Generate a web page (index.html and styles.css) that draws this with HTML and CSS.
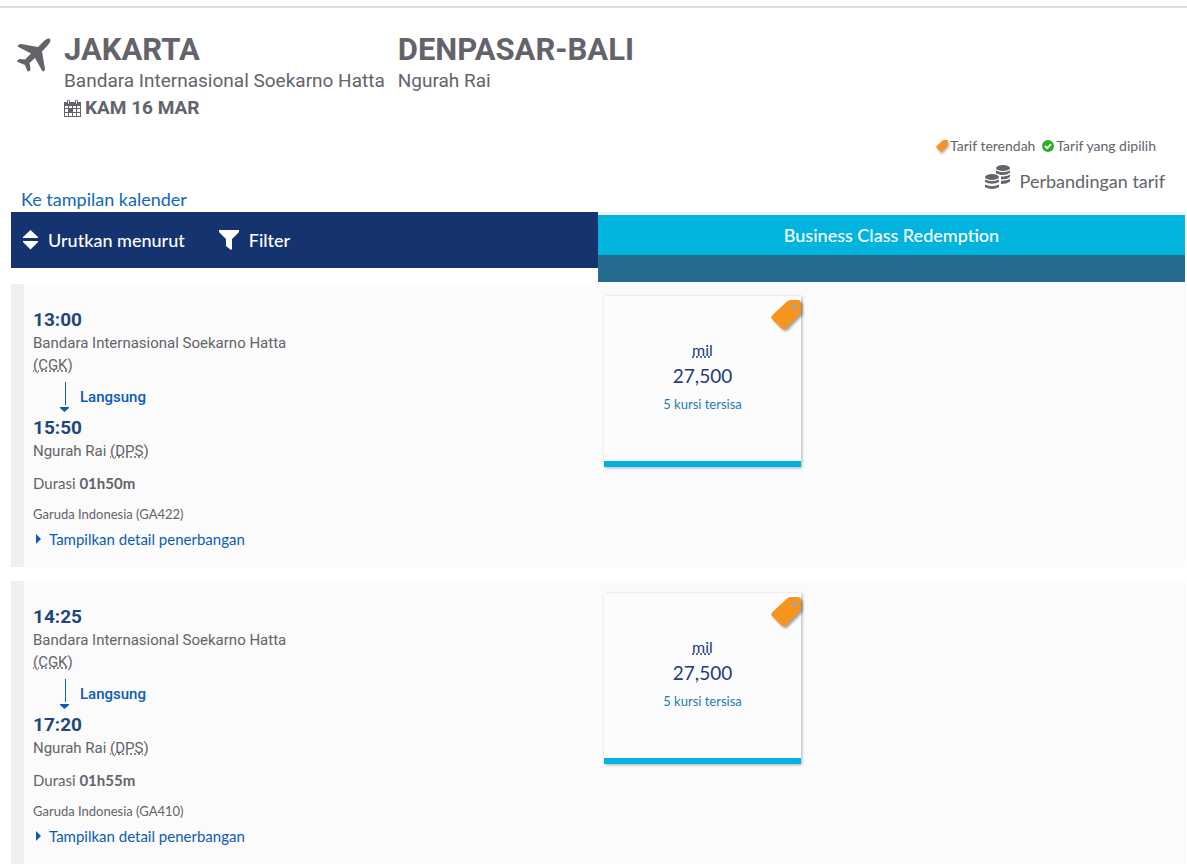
FILE: index.html
```html
<!DOCTYPE html>
<html lang="id">
  <head>
    <meta charset="UTF-8" />
    <meta name="viewport" content="width=device-width, initial-scale=1.0" />
    <title>Jakarta - Denpasar-Bali</title>

    <link rel="stylesheet" href="styles.css">
  </head>
  <body>
    <svg class="sprite" aria-hidden="true">
      <symbol id="icon-tag" viewBox="0 0 30 30">
        <path d="M16 1.500Q17.500 0 19.500 0H26.500Q30 0 30 3.500V11Q30 13 28.500 14.500L14.500 28.500Q12.500 30 10.500 28.500L1 19Q-.5 17 1 15.500Z" fill="#f7941e" />
        <circle cx="23" cy="7" r="2.500" fill="#a9a5a0" />
      </symbol>
    </svg>

    <header class="trip">
      <svg class="trip-plane" viewBox="0 0 34 34" aria-hidden="true">
        <path d="M33 1C34 2 33 5 31 7L25 13.500 28 31Q28 32 27 33L26.500 33.500Q25.500 33.500 25 32.500L18 20 12.500 25 13.500 31Q13.500 32 12.500 33L11.500 33.500Q10.500 33.500 10 32L8 27 2 24.500Q0 24 0 23Q1 21.500 2.500 21L8 21.500 14 15.500 1.500 9Q0 8.500 1 7.500L2 6.500Q3 6 4 6L21 9 27 3C29 1 32 0 33 1Z" />
      </svg>
      <div class="trip-place">
        <h1 class="trip-city">JAKARTA</h1>
        <p class="trip-airport">Bandara Internasional Soekarno Hatta</p>
        <p class="trip-date">
          <svg class="trip-calendar" viewBox="0 0 17 18" aria-hidden="true">
            <path d="M0 3H17V18H0ZM1 7V9H4V7ZM5 7V9H8V7ZM9 7V9H12V7ZM13 7V9H16V7ZM1 10V13H4V10ZM9 10V13H12V10ZM13 10V13H16V10ZM1 14V17H4V14ZM5 14V17H8V14ZM9 14V17H12V14ZM13 14V17H16V14Z" fill-rule="evenodd" />
            <rect x="3.500" y="1" width="2" height="4" rx="1" fill="#fff" stroke="#63636b" />
            <rect x="11.500" y="1" width="2" height="4" rx="1" fill="#fff" stroke="#63636b" />
          </svg>
          KAM 16 MAR
        </p>
      </div>
      <div class="trip-place">
        <h1 class="trip-city">DENPASAR-BALI</h1>
        <p class="trip-airport">Ngurah Rai</p>
      </div>
    </header>

    <main class="results">
      <div class="legend">
        <span class="legend-item">
          <svg class="legend-tag" aria-hidden="true"><use href="#icon-tag" /></svg>Tarif terendah
        </span>
        <span class="legend-item">
          <svg class="legend-check" viewBox="0 0 12 12" aria-hidden="true">
            <circle cx="6" cy="6" r="6" fill="#2bb02b" />
            <path d="M3 6L5.200 8.200 9 4.200" fill="none" stroke="#fff" stroke-width="1.800" />
          </svg>Tarif yang dipilih
        </span>
      </div>

      <div class="options">
        <a class="calendar-link" href="#">Ke tampilan kalender</a>
        <div class="compare">
          <svg class="compare-coins" viewBox="0 0 25 25" aria-hidden="true">
            <ellipse cx="18" cy="3" rx="7" ry="3" />
            <path d="M11 5.500Q18 9 25 5.500V7.500Q22 10.500 16 10 14 9 11 8.500ZM16 11.500Q22 11.500 25 9.500V12Q22 14.500 16 14.500ZM16 16Q22 15.500 25 14V16.500Q22 19 16 19Z" />
            <ellipse cx="7" cy="12" rx="7" ry="3" />
            <path d="M0 14.500Q7 18 14 14.500V17Q7 20.500 0 17ZM0 19.500Q7 23 14 19.500V22Q7 26 0 22Z" />
          </svg>
          Perbandingan tarif
        </div>
      </div>

      <div class="toolbar">
        <div class="toolbar-actions">
          <button class="toolbar-btn" type="button">
            <svg class="icon-sort" viewBox="0 0 15 20" aria-hidden="true"><path d="M7.500 0L15 7V8H0V7ZM0 11H15V12L7.500 19.500 0 12Z" /></svg>
            Urutkan menurut
          </button>
          <button class="toolbar-btn" type="button">
            <svg class="icon-filter" viewBox="0 0 20 20" aria-hidden="true"><path d="M0 0H20V2L13 9V19L12 20 7 16V9L0 2Z" /></svg>
            Filter
          </button>
        </div>
        <div class="cabin">
          <div class="cabin-name">Business Class Redemption</div>
          <div class="cabin-strip"></div>
        </div>
      </div>

      <section class="flight">
        <div class="flight-info">
          <div class="flight-time">13:00</div>
          <div class="flight-airport">Bandara Internasional Soekarno Hatta <abbr title="Jakarta">(CGK)</abbr></div>
          <div class="flight-stops">
            <svg class="icon-arrow" viewBox="0 0 9 30" aria-hidden="true"><path d="M5 0H6V23H5ZM0 25H9V26L4.500 30 0 26Z" /></svg>
            Langsung
          </div>
          <div class="flight-time">15:50</div>
          <div class="flight-airport">Ngurah Rai <abbr title="Denpasar">(DPS)</abbr></div>
          <div class="flight-duration">Durasi <strong>01h50m</strong></div>
          <div class="flight-carrier">Garuda Indonesia (GA422)</div>
          <a class="flight-details" href="#">Tampilkan detail penerbangan</a>
        </div>
        <div class="flight-fares">
          <button class="fare" type="button">
            <svg class="fare-tag" aria-hidden="true"><use href="#icon-tag" /></svg>
            <abbr class="fare-unit" title="miles">mil</abbr>
            <span class="fare-price">27,500</span>
            <span class="fare-seats">5 kursi tersisa</span>
          </button>
        </div>
      </section>

      <section class="flight">
        <div class="flight-info">
          <div class="flight-time">14:25</div>
          <div class="flight-airport">Bandara Internasional Soekarno Hatta <abbr title="Jakarta">(CGK)</abbr></div>
          <div class="flight-stops">
            <svg class="icon-arrow" viewBox="0 0 9 30" aria-hidden="true"><path d="M5 0H6V23H5ZM0 25H9V26L4.500 30 0 26Z" /></svg>
            Langsung
          </div>
          <div class="flight-time">17:20</div>
          <div class="flight-airport">Ngurah Rai <abbr title="Denpasar">(DPS)</abbr></div>
          <div class="flight-duration">Durasi <strong>01h55m</strong></div>
          <div class="flight-carrier">Garuda Indonesia (GA410)</div>
          <a class="flight-details" href="#">Tampilkan detail penerbangan</a>
        </div>
        <div class="flight-fares">
          <button class="fare" type="button">
            <svg class="fare-tag" aria-hidden="true"><use href="#icon-tag" /></svg>
            <abbr class="fare-unit" title="miles">mil</abbr>
            <span class="fare-price">27,500</span>
            <span class="fare-seats">5 kursi tersisa</span>
          </button>
        </div>
      </section>
    </main>
  </body>
</html>
```

FILE: styles.css
```css
* {
  box-sizing: border-box;
}

body {
  margin: 0;
  padding-top: 6px;
  background-color: #fff;
  color: #63636b;
  font-family: Lato, sans-serif;
  font-size: 15px;
}

h1,
p {
  margin: 0;
}

a {
  text-decoration: none;
}

button {
  border: 0;
  font-family: inherit;
  cursor: pointer;
}

.sprite {
  display: none;
}

/* trip header */
.trip {
  display: flex;
  align-items: flex-start;
  gap: 13px;
  padding: 24px 17px 0;
  border-top: 2px solid #dcdcdc;
  font-family: Roboto, sans-serif;
}

.trip-plane {
  width: 34px;
  height: 34px;
  margin-top: 6px;
  fill: #63636b;
}

.trip-city {
  font-size: 31px;
  line-height: 36px;
  font-weight: 700;
}

.trip-airport {
  font-size: 19px;
  line-height: 26px;
}

.trip-date {
  display: flex;
  align-items: center;
  gap: 4px;
  font-size: 19px;
  line-height: 28px;
  font-weight: 700;
}

.trip-calendar {
  width: 17px;
  height: 18px;
  fill: #63636b;
}

/* legend */
.results {
  padding: 0 2px 0 11px;
}

.legend {
  display: flex;
  justify-content: flex-end;
  gap: 7px;
  margin-top: 14px;
  padding-right: 29px;
  font-size: 14px;
  line-height: 20px;
}

.legend-item {
  display: flex;
  align-items: center;
  gap: 2px;
}

.legend-tag {
  width: 12px;
  height: 12px;
  overflow: visible;
  filter: drop-shadow(1px 2px 1px rgba(0, 0, 0, 0.3));
}

.legend-check {
  width: 12px;
  height: 12px;
}

.options {
  display: flex;
  justify-content: space-between;
  height: 56px;
  padding: 9px 20px 0 10px;
}

.compare {
  display: flex;
  align-items: center;
  align-self: flex-start;
  gap: 10px;
  font-size: 18px;
  line-height: 26px;
}

.compare-coins {
  width: 25px;
  height: 25px;
  margin-bottom: 6px;
  fill: #63636b;
}

.calendar-link {
  align-self: flex-end;
  color: #0f68b8;
  font-size: 18px;
  line-height: 26px;
}

/* toolbar */
.toolbar {
  display: grid;
  grid-template-columns: 1fr 1fr;
  align-items: start;
}

.toolbar-actions {
  display: flex;
  gap: 34px;
  height: 56px;
  padding: 0 12px;
  background-color: #15336f;
}

.toolbar-btn {
  display: flex;
  align-items: center;
  gap: 10px;
  padding: 0;
  background: none;
  color: #fff;
  font-size: 18px;
  font-weight: 500;
}

.toolbar-btn svg {
  fill: #fff;
}

.icon-sort {
  width: 15px;
  height: 20px;
}

.icon-filter {
  width: 20px;
  height: 20px;
}

.cabin {
  border-top: 3px solid #efefef;
}

.cabin-name {
  background-color: #00b4de;
  color: #fff;
  font-size: 18px;
  line-height: 40px;
  font-weight: 500;
  text-align: center;
}

.cabin-strip {
  height: 27px;
  background-color: #236c8d;
}

/* flights */
.flight {
  display: grid;
  grid-template-columns: 1fr 1fr;
  margin-top: 14px;
  background-color: #fbfbfb;
}

.toolbar + .flight {
  margin-top: 2px;
}

.flight-info {
  padding: 24px 9px 16px;
  border-left: 13px solid #efefef;
}

.flight-time {
  color: #1f477f;
  font-family: Roboto, sans-serif;
  font-size: 19px;
  line-height: 24px;
  font-weight: 700;
}

.flight-airport {
  max-width: 270px;
  font-family: Roboto, sans-serif;
  font-size: 15px;
  line-height: 22px;
}

.flight-stops {
  display: flex;
  align-items: center;
  gap: 11px;
  height: 40px;
  padding: 2px 0 0 27px;
  color: #0b5cb5;
  font-family: Roboto, sans-serif;
  font-size: 15px;
  font-weight: 500;
}

.icon-arrow {
  width: 9px;
  height: 30px;
  fill: #0b5cb5;
}

.flight-duration {
  margin-top: 10px;
  font-size: 15px;
  line-height: 22px;
}

.flight-carrier {
  margin-top: 10px;
  font-size: 13px;
  line-height: 20px;
}

.flight-details {
  display: flex;
  align-items: center;
  gap: 8px;
  width: fit-content;
  margin-top: 3px;
  padding-left: 3px;
  color: #0b5cb5;
  font-size: 15px;
  line-height: 24px;
}

.flight-details::before {
  content: "";
  border: 5px solid transparent;
  border-left-color: #0b5cb5;
  border-right: 0;
}

.flight-fares {
  padding: 12px 6px;
}

.fare {
  position: relative;
  display: flex;
  flex-direction: column;
  align-items: center;
  width: 197px;
  height: 171px;
  padding: 42px 0 0;
  border-bottom: 6px solid #00b4de;
  background-color: #fcfcfc;
  box-shadow: 1px 1px 3px rgba(0, 0, 0, 0.3);
  color: #1f3b78;
}

.fare-tag {
  position: absolute;
  top: 4px;
  right: 0;
  width: 30px;
  height: 30px;
  overflow: visible;
  filter: drop-shadow(2px 2px 1px rgba(0, 0, 0, 0.35));
}

.fare-unit {
  font-size: 16px;
  line-height: 24px;
}

.fare-price {
  font-size: 19px;
  line-height: 28px;
}

.fare-seats {
  margin-top: 4px;
  color: #1f7ab8;
  font-size: 13px;
  line-height: 20px;
}
```
